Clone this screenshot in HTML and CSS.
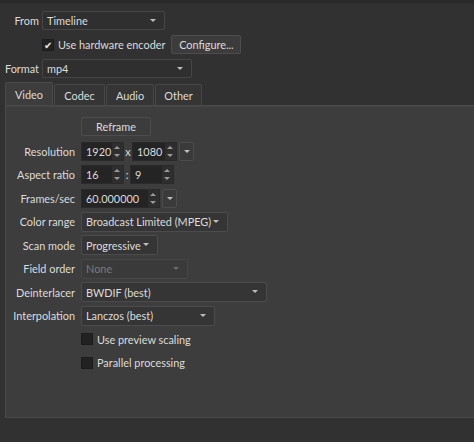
FILE: index.html
```html
<!DOCTYPE html>
<html>
<head>
<meta charset="utf-8">
<link rel="stylesheet" href="styles.css">
</head>
<body>
<div class="topstrip"></div>
<div class="top">
  <div class="trow">
    <span class="tlabel">From</span>
    <div class="combo w-from"><span>Timeline</span><i class="arrow"></i></div>
  </div>
  <div class="trow">
    <span class="tlabel"></span>
    <label class="check"><span class="box checked">&#10004;</span><span>Use hardware encoder</span></label>
    <div class="button cfg">Configure...</div>
  </div>
  <div class="trow">
    <span class="tlabel">Format</span>
    <div class="combo w-fmt"><span>mp4</span><i class="arrow"></i></div>
  </div>
</div>
<div class="tabs">
  <div class="tab active">Video</div>
  <div class="tab">Codec</div>
  <div class="tab">Audio</div>
  <div class="tab">Other</div>
</div>
<div class="pane">
  <div class="grid">
    <span class="first"></span>
    <div class="button reframe first">Reframe</div>

    <span class="label">Resolution</span>
    <div class="line">
      <div class="spin w-res"><span>1920</span><i class="updown"></i></div>
      <span class="sep">x</span>
      <div class="spin w-res2"><span>1080</span><i class="updown"></i></div>
      <div class="dbtn"><i class="arrow"></i></div>
    </div>

    <span class="label">Aspect ratio</span>
    <div class="line">
      <div class="spin w-res"><span>16</span><i class="updown"></i></div>
      <span class="sep colon">:</span>
      <div class="spin w-asp2"><span>9</span><i class="updown"></i></div>
    </div>

    <span class="label">Frames/sec</span>
    <div class="line">
      <div class="spin w-fps"><span>60.000000</span><i class="updown"></i></div>
      <div class="dbtn"><i class="arrow"></i></div>
    </div>

    <span class="label">Color range</span>
    <div class="combo in w-cr"><span>Broadcast Limited (MPEG)</span><i class="arrow"></i></div>

    <span class="label">Scan mode</span>
    <div class="combo in w-scan"><span>Progressive</span><i class="arrow"></i></div>

    <span class="label">Field order</span>
    <div class="combo in disabled w-field"><span>None</span><i class="arrow"></i></div>

    <span class="label">Deinterlacer</span>
    <div class="combo in w-deint"><span>BWDIF (best)</span><i class="arrow"></i></div>

    <span class="label">Interpolation</span>
    <div class="combo in w-interp"><span>Lanczos (best)</span><i class="arrow"></i></div>

    <span></span>
    <label class="check crow"><span class="box"></span><span>Use preview scaling</span></label>

    <span></span>
    <label class="check crow"><span class="box"></span><span>Parallel processing</span></label>
  </div>
</div>
</body>
</html>
```
FILE: styles.css
```css
* { box-sizing: border-box; }
html, body { margin: 0; padding: 0; }
body {
  width: 474px;
  height: 442px;
  overflow: hidden;
  background: #313131;
  color: #dcdcdc;
  font-family: Lato, "Noto Sans", sans-serif;
  font-size: 10.9px;
}
.topstrip { height: 4px; background: #2a2a2a; border-bottom: 1px solid #2e2e2e; }
.top { display: flex; flex-direction: column; gap: 5px; padding: 7px 0 0 0; }
.trow { display: flex; align-items: center; gap: 3px; height: 19px; }
.tlabel { width: 39px; text-align: right; flex: none; }

.combo {
  position: relative;
  height: 19px;
  display: flex;
  align-items: center;
  padding-left: 4px;
  background: #2f2f2f;
  border: 1px solid #464646;
  border-radius: 2px;
  white-space: nowrap;
}
.combo.in { background: #353535; border-color: #4c4c4c; }
.combo.disabled { color: #7a7a7a; background: #3a3a3a; border-color: #474747; }
.combo.disabled .arrow { border-top-color: #6a6a6a; }
.arrow {
  position: absolute;
  right: 8px;
  top: 7px;
  width: 0; height: 0;
  border-left: 3.5px solid transparent;
  border-right: 3.5px solid transparent;
  border-top: 3px solid #bdbdbd;
}
.w-from { width: 123px; }
.w-fmt { width: 150px; }
.w-cr { width: 147px; }
.w-scan { width: 77px; }
.w-field { width: 107px; }
.w-deint { width: 186px; }
.w-interp { width: 134px; }

.check { display: flex; align-items: center; gap: 4px; white-space: nowrap; }
.box {
  width: 12px; height: 12px;
  background: #222;
  border: 1px solid #1c1c1c;
  display: flex; align-items: center; justify-content: center;
  font-size: 10px; color: #e8e8e8; line-height: 1;
}
.trow .check { margin-right: 3px; }

.button {
  height: 19px;
  display: flex; align-items: center; justify-content: center;
  background: #3c3c3c;
  border: 1px solid #4d4d4d;
  border-radius: 2px;
}
.cfg { width: 70px; }

.tabs { display: flex; align-items: flex-end; padding-left: 5px; margin-top: 4px; height: 23px; }
.tab {
  height: 21px;
  display: flex; align-items: center; justify-content: center;
  background: #353535;
  border: 1px solid #474747;
  border-bottom: none;
  margin-right: 1px;
  border-radius: 2px 2px 0 0;
}
.tab:nth-child(2) { width: 51px; }
.tab:nth-child(3) { width: 48px; }
.tab:nth-child(4) { width: 47px; }
.tab.active { height: 23px; width: 48px; background: #3d3d3d; border-color: #4a4a4a; }

.pane {
  margin-left: 5px;
  height: 313px;
  background: #3d3d3d;
  border: 1px solid #4a4a4a;
  border-right: none;
  box-shadow: inset 0 1px 0 #454545;
  padding-top: 10px;
}
.grid {
  display: grid;
  grid-template-columns: 69px auto;
  column-gap: 6px;
  row-gap: 3.5px;
  justify-items: start;
  align-items: center;
}
.grid > * { height: 20px; }
.grid > .first { margin-bottom: 1.5px; }
.label { justify-self: end; display: flex; align-items: center; white-space: nowrap; }
.reframe { width: 70px; height: 19px; }

.line { display: flex; align-items: center; gap: 0; }
.spin {
  position: relative;
  height: 19px;
  background: #242424;
  border: 1px solid #2a2a2a;
  display: flex; align-items: center;
  padding-left: 4px;
}
.updown {
  position: absolute;
  right: 0; top: 0; bottom: 0;
  width: 11px;
  background: #2e2e2e;
}
.updown::before, .updown::after {
  content: "";
  position: absolute;
  left: 2px;
  border-left: 3.5px solid transparent;
  border-right: 3.5px solid transparent;
}
.updown::before { top: 3px; border-bottom: 3px solid #9a9a9a; }
.updown::after { bottom: 3px; border-top: 3px solid #9a9a9a; }
.w-res { width: 43px; }
.w-res2 { width: 45px; }
.w-asp2 { width: 44px; }
.w-fps { width: 79px; }
.sep { width: 8px; text-align: center; }
.colon { width: 6px; }
.dbtn {
  position: relative;
  width: 15px; height: 19px;
  margin-left: 2px;
  background: #3a3a3a;
  border: 1px solid #4c4c4c;
  border-radius: 2px;
}
.dbtn .arrow { right: 3px; top: 7px; }
.crow { height: 20px; }
```
